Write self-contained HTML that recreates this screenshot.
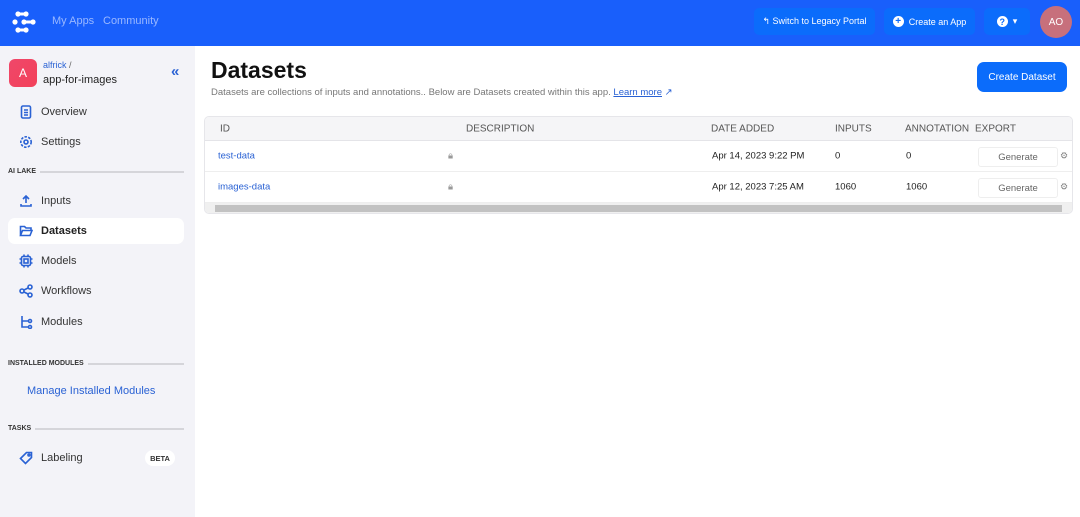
<!DOCTYPE html>
<html><head><meta charset="utf-8"><style>
*{box-sizing:border-box;margin:0;padding:0}
body{width:1080px;height:517px;overflow:hidden;font-family:"Liberation Sans",sans-serif;background:#fff;position:relative;color:#222}
.top{position:absolute;left:0;top:0;width:1080px;height:46px;background:#195ffb}
.top .nav{position:absolute;top:15px;font-size:11px;color:#9ab8ff}
.tb{position:absolute;top:8px;height:27px;background:#0b6cfb;border-radius:5px;color:#fff;font-size:9px;display:flex;align-items:center;justify-content:center;gap:5px;white-space:nowrap}
.ic{display:inline-flex;width:11px;height:11px;border-radius:50%;background:#fff;color:#0b6cfb;font-weight:bold;align-items:center;justify-content:center;font-size:10px}
.side{position:absolute;left:0;top:46px;width:195px;height:471px;background:#f3f3f8}
.it{position:absolute;left:8px;width:176px;height:26px;display:flex;align-items:center;font-size:11px;color:#333;padding-left:11px;gap:8px;border-radius:7px}
.it svg{width:14px;height:14px;fill:none;stroke:#2a62d4;stroke-width:1.6}
.sec{position:absolute;left:8px;font-size:7px;font-weight:bold;color:#333;display:flex;align-items:center;gap:4px;width:176px}
.sec:after{content:"";flex:1;height:2px;background:#d5d5da}
.tbl{position:absolute;left:204px;top:116px;width:869px;height:98px;border:1px solid #e6e6ea;border-radius:5px;overflow:hidden;font-size:9.5px}
.hd{height:24px;background:#f5f5f7;border-bottom:1px solid #e4e4e8;position:relative;color:#555;font-size:10px}
.row{height:31px;border-bottom:1px solid #eee;position:relative}
.c{position:absolute;top:50%;transform:translateY(-50%)}
.gen{position:absolute;left:773px;top:6px;width:80px;height:20px;border:1px solid #eee;border-radius:3px;color:#666;font-size:9.5px;display:flex;align-items:center;justify-content:center;background:#fff}
.fc{display:flex;align-items:center;justify-content:center}
</style></head><body>
<div class="top">
<svg style="position:absolute;left:12px;top:11px" width="26" height="22" viewBox="0 0 26 22"><g fill="#fff"><circle cx="6" cy="3" r="2.6"/><circle cx="14" cy="3" r="2.6"/><rect x="6" y="1.5" width="8" height="3"/><circle cx="3" cy="11" r="2.6"/><circle cx="12" cy="11" r="2.6"/><circle cx="21" cy="11" r="2.6"/><rect x="12" y="9.5" width="9" height="3"/><circle cx="6" cy="19" r="2.6"/><circle cx="14" cy="19" r="2.6"/><rect x="6" y="17.5" width="8" height="3"/></g></svg>
<span class="nav" style="left:52px">My Apps</span><span class="nav" style="left:103px">Community</span>
<div class="tb" style="left:754px;width:121px">↰ Switch to Legacy Portal</div>
<div class="tb" style="left:884px;width:91px"><span class="ic">+</span> Create an App</div>
<div class="tb" style="left:984px;width:46px"><span class="ic" style="font-size:9px">?</span> ▾</div>
<div class="fc" style="position:absolute;left:1040px;top:6px;width:32px;height:32px;border-radius:50%;background:#c7707c;color:#fff;font-size:10px">AO</div>
</div>
<div class="side">
<div class="fc" style="position:absolute;left:9px;top:13px;width:28px;height:28px;border-radius:6px;background:linear-gradient(135deg,#f0476a,#f2415a);color:#fff;font-size:12px">A</div>
<div style="position:absolute;left:43px;top:14px;font-size:9px;color:#2a62d4">alfrick <span style="color:#666">/</span></div>
<div style="position:absolute;left:43px;top:28px;font-size:11px;color:#222">app-for-images</div>
<div style="position:absolute;left:171px;top:17px;color:#2a62d4;font-size:15px;font-weight:bold">«</div>
<div class="it" style="top:53px"><svg viewBox="0 0 14 14"><rect x="2.5" y="1" width="9" height="12" rx="1.5"/><path d="M5 5h4M5 7.5h4M5 10h4"/></svg>Overview</div>
<div class="it" style="top:83px"><svg viewBox="0 0 14 14"><circle cx="7" cy="7" r="2"/><circle cx="7" cy="7" r="5.2" stroke-dasharray="2.5 1.3"/></svg>Settings</div>
<div class="sec" style="top:122px">AI LAKE</div>
<div class="it" style="top:142px"><svg viewBox="0 0 14 14"><path d="M7 9V2M4 5l3-3 3 3M2 10v2h10v-2"/></svg>Inputs</div>
<div class="it" style="top:172px;background:#fff;font-weight:bold;color:#222"><svg viewBox="0 0 14 14"><path d="M1.5 11.5V2.5h4l1.5 1.5h5v2M1.5 11.5l2-5h9.5l-2 5z"/></svg>Datasets</div>
<div class="it" style="top:202px"><svg viewBox="0 0 14 14"><rect x="2.5" y="2.5" width="9" height="9" rx="1.5"/><rect x="5" y="5" width="4" height="4"/><path d="M5 0.5v2M9 0.5v2M5 11.5v2M9 11.5v2M0.5 5h2M0.5 9h2M11.5 5h2M11.5 9h2"/></svg>Models</div>
<div class="it" style="top:232px"><svg viewBox="0 0 14 14"><circle cx="3" cy="7" r="2"/><circle cx="11" cy="3" r="2"/><circle cx="11" cy="11" r="2"/><path d="M5 6l4-2M5 8l4 2"/></svg>Workflows</div>
<div class="it" style="top:263px"><svg viewBox="0 0 14 14"><path d="M3 1v11h7M3 6h7"/><circle cx="11" cy="6" r="1.5"/><circle cx="11" cy="12" r="1.5"/></svg>Modules</div>
<div class="sec" style="top:314px">INSTALLED MODULES</div>
<div style="position:absolute;left:27px;top:339px;font-size:11px;color:#2a62d4">Manage Installed Modules</div>
<div class="sec" style="top:379px">TASKS</div>
<div class="it" style="top:399px"><svg viewBox="0 0 14 14"><path d="M1.5 7.5L7.5 1.5h5v5l-6 6z"/><circle cx="10" cy="4" r="1"/></svg>Labeling</div>
<div class="fc" style="position:absolute;left:145px;top:404px;width:30px;height:16px;border-radius:8px;background:#fff;font-size:7.5px;font-weight:bold;color:#333">BETA</div>
</div>
<div style="position:absolute;left:211px;top:57px;font-size:23px;font-weight:bold;color:#111">Datasets</div>
<div style="position:absolute;left:211px;top:87px;font-size:9.5px;color:#777">Datasets are collections of inputs and annotations.. Below are Datasets created within this app. <span style="color:#2a62d4;text-decoration:underline">Learn more</span> <span style="color:#2a62d4">↗</span></div>
<div class="fc" style="position:absolute;left:977px;top:62px;width:90px;height:30px;border-radius:7px;background:#0b6cfb;color:#fff;font-size:10px">Create Dataset</div>
<div class="tbl">
<div class="hd"><span class="c" style="left:15px">ID</span><span class="c" style="left:261px">DESCRIPTION</span><span class="c" style="left:506px">DATE ADDED</span><span class="c" style="left:630px">INPUTS</span><span class="c" style="left:700px">ANNOTATION</span><span class="c" style="left:770px">EXPORT</span></div>
<div class="row"><span class="c" style="left:13px;color:#2a62d4">test-data</span><span class="c" style="left:243px;color:#999">🔒︎</span><span class="c" style="left:507px">Apr 14, 2023 9:22 PM</span><span class="c" style="left:630px">0</span><span class="c" style="left:701px">0</span><div class="gen">Generate</div><span class="c" style="left:855px;color:#888;font-size:9px">⚙</span></div>
<div class="row"><span class="c" style="left:13px;color:#2a62d4">images-data</span><span class="c" style="left:243px;color:#999">🔒︎</span><span class="c" style="left:507px">Apr 12, 2023 7:25 AM</span><span class="c" style="left:630px">1060</span><span class="c" style="left:701px">1060</span><div class="gen">Generate</div><span class="c" style="left:855px;color:#888;font-size:9px">⚙</span></div>
<div style="height:11px;background:#f0f0f0;position:relative"><div style="position:absolute;left:10px;right:10px;top:2px;height:7px;background:#c2c2c2"></div></div>
</div>
</body></html>
